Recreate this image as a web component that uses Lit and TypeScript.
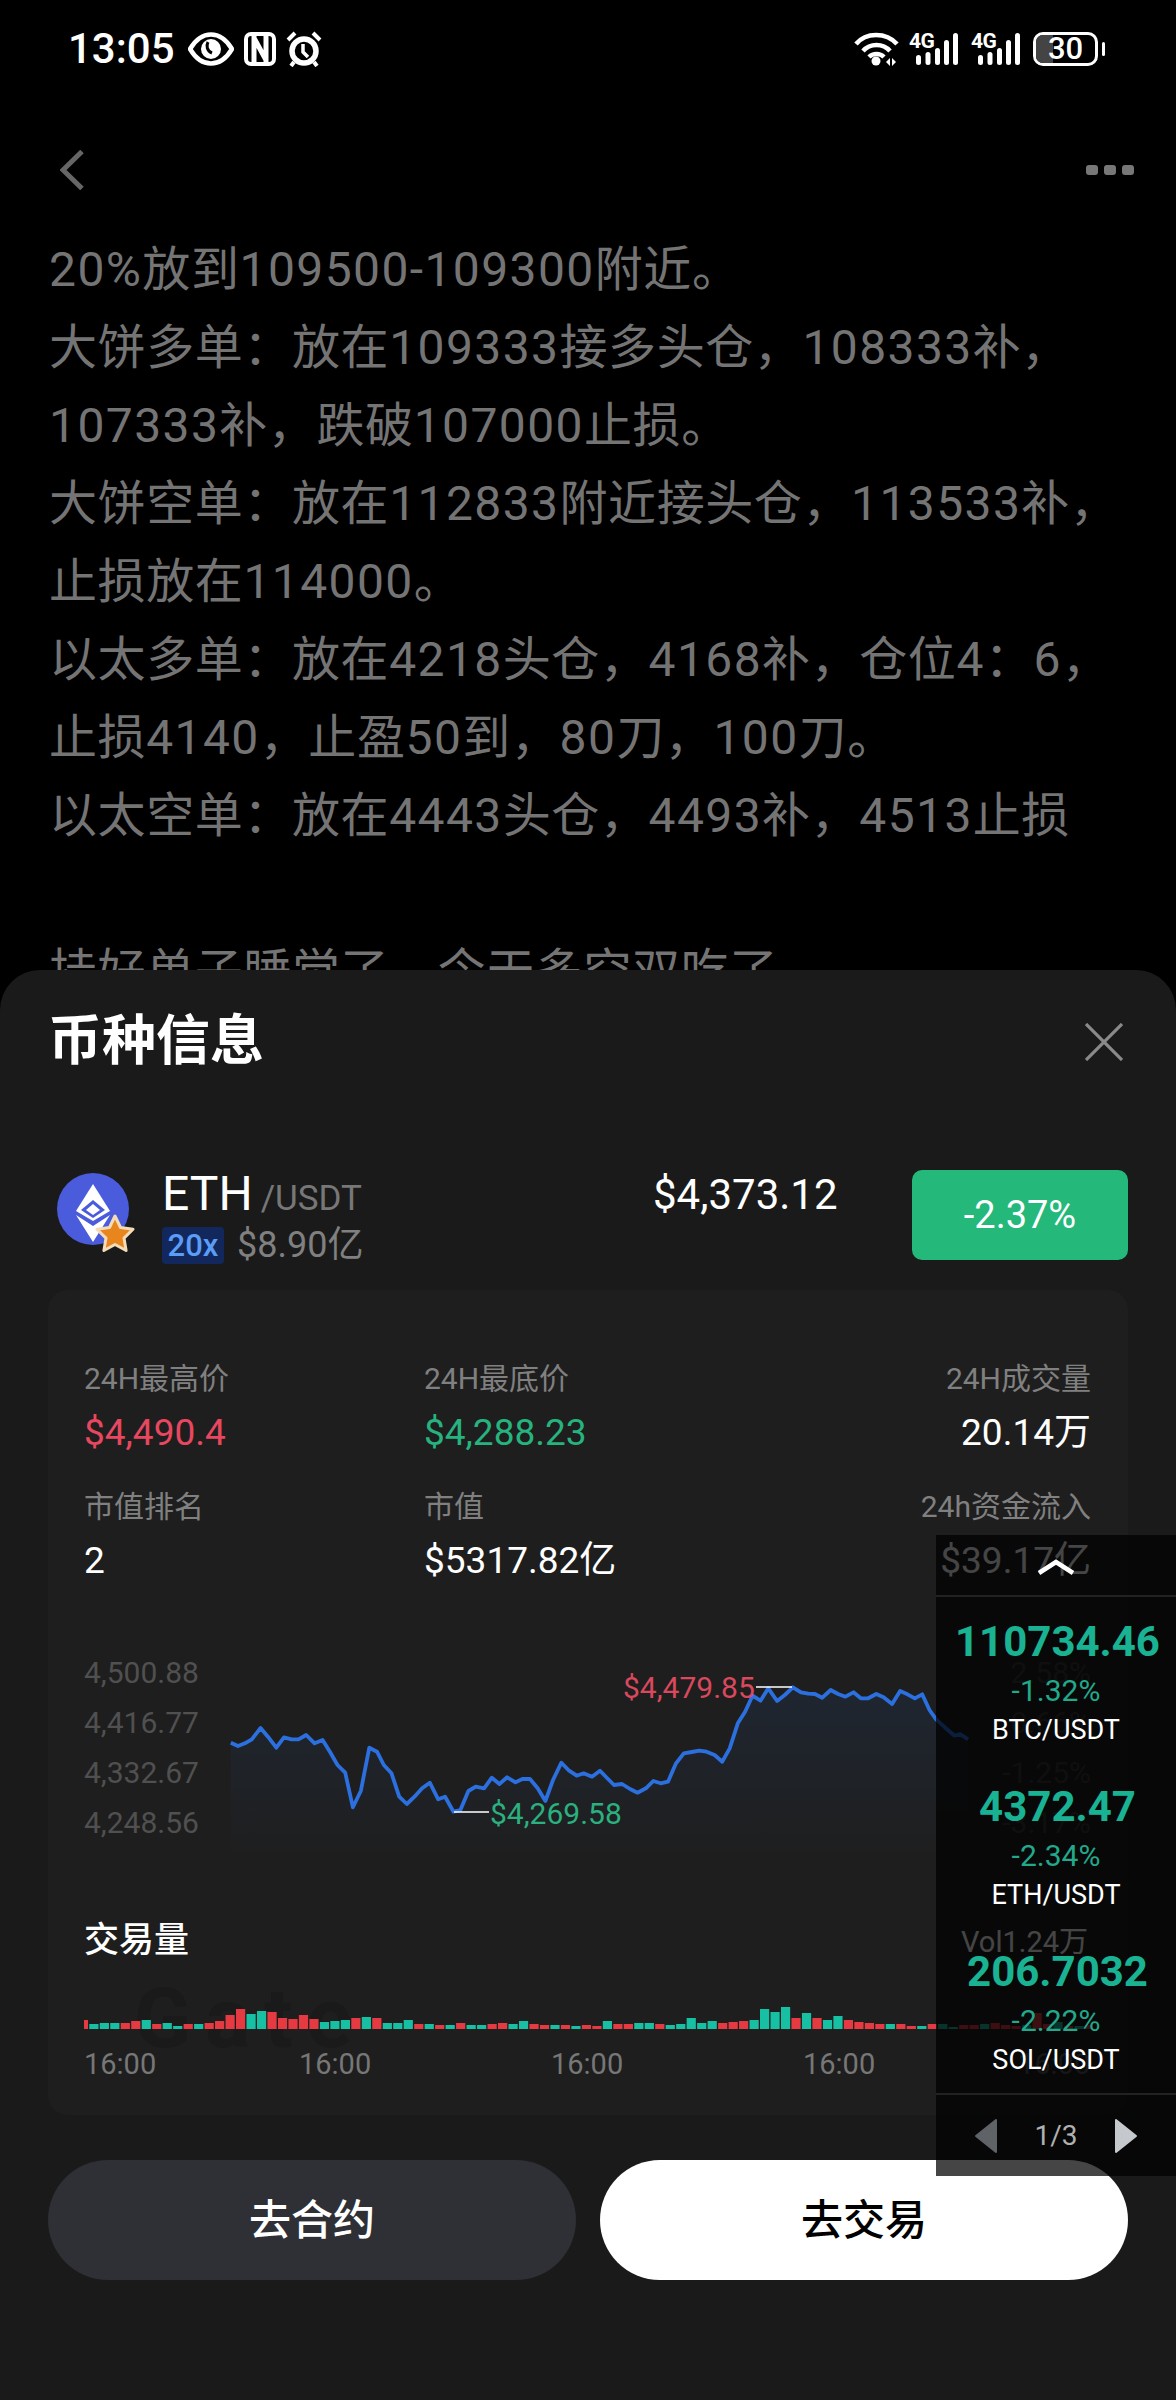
import {css, html, svg, LitElement} from 'lit';
import {customElement} from 'lit/decorators.js';

const note = [
	'20%放到109500-109300附近。',
	'大饼多单：放在109333接多头仓，108333补，',
	'107333补，跌破107000止损。',
	'大饼空单：放在112833附近接头仓，113533补，',
	'止损放在114000。',
	'以太多单：放在4218头仓，4168补，仓位4：6，',
	'止损4140，止盈50到，80刀，100刀。',
	'以太空单：放在4443头仓，4493补，4513止损',
	'',
	'挂好单子睡觉了，今天多空双吃了',
];

const stats = [
	{label: '24H最高价', value: '$4,490.4', cls: 'up'},
	{label: '24H最底价', value: '$4,288.23', cls: 'down'},
	{label: '24H成交量', value: '20.14万', cls: 'end'},
	{label: '市值排名', value: '2', cls: ''},
	{label: '市值', value: '$5317.82亿', cls: ''},
	{label: '24h资金流入', value: '$39.17亿', cls: 'end'},
];

const tickers = [
	{price: '110734.46', change: '-1.32%', pair: 'BTC/USDT'},
	{price: '4372.47', change: '-2.34%', pair: 'ETH/USDT'},
	{price: '206.7032', change: '-2.22%', pair: 'SOL/USDT'},
];

// traced from the chart, x in page px and y in page px
const lineA = [[603,428],[622,438],[640,430],[658,418],[681,384],[700,410],[722,443],[742,412],[762,418],[780,418],[800,405],[822,430],[843,420],[862,455],[882,495],[902,518],[922,622],[943,572],[965,443],[985,455],[1003,495],[1023,520],[1043,590],[1063,612],[1083,590],[1103,565],[1123,548],[1145,598],[1163,590],[1185,635],[1203,630],[1224,573],[1243,560],[1265,565],[1285,533],[1305,552],[1325,532],[1347,547],[1365,537],[1385,537],[1405,565],[1425,603],[1445,540],[1467,488],[1487,512],[1507,527],[1525,520],[1547,530]];
const lineB = [[0,512],[20,535],[38,555],[60,552],[82,567],[102,578],[125,565],[145,543],[165,550],[185,545],[207,490],[228,460],[250,456],[270,452],[290,455],[312,465],[333,485],[353,445],[375,370],[395,335],[415,287],[437,302],[458,265],[482,303],[503,285],[525,262],[547,277],[567,281],[585,282],[605,293],[628,270],[648,282],[668,290],[690,277],[710,295],[730,295],[752,282],[772,292],[795,312],[817,273],[837,283],[857,295],[877,283],[897,330],[915,358],[940,383],[965,407],[980,402],[1002,418]];
const points = [
	...lineA.map(([x, y]) => [x / 2.613, 1600 + y / 3]),
	...lineB.map(([x, y]) => [600 + x / 2.722, 1600 + y / 3]),
];
const linePath = points.map(([x, y], i) => `${i ? 'L' : 'M'}${x.toFixed(1)} ${y.toFixed(1)}`).join(' ');
const areaPath = `${linePath} L${points[points.length - 1][0].toFixed(1)} 1860 L${points[0][0].toFixed(1)} 1860 Z`;

// volume bars: height in px, u = red, d = green
const bars: [number, 'u' | 'd'][] = [
	[9,'u'],[5,'d'],[6,'d'],[6,'d'],[6,'u'],[8,'u'],[9,'d'],[5,'u'],[6,'d'],[3,'d'],[5,'u'],[5,'d'],[6,'u'],[8,'u'],[14,'u'],[20,'u'],[15,'d'],[18,'d'],[17,'u'],[11,'u'],[10,'u'],[14,'u'],[10,'u'],[7,'d'],[8,'d'],[9,'d'],[11,'u'],[12,'d'],[11,'u'],[6,'d'],[6,'d'],[9,'d'],[5,'u'],[5,'d'],[4,'u'],[4,'d'],[6,'u'],[4,'d'],[4,'d'],[5,'u'],[6,'u'],[5,'d'],[8,'d'],[5,'u'],[4,'u'],[4,'d'],[4,'u'],[3,'d'],[4,'u'],[3,'u'],
	[8,'d'],[5,'u'],[5,'u'],[6,'d'],[6,'d'],[5,'u'],[4,'d'],[5,'d'],[11,'d'],[6,'d'],[8,'d'],[6,'u'],[7,'u'],[8,'u'],[9,'d'],[20,'d'],[17,'d'],[22,'d'],[11,'u'],[16,'d'],[11,'u'],[9,'d'],[13,'d'],[9,'u'],[7,'u'],[6,'u'],[5,'u'],[5,'d'],[5,'u'],[3,'u'],[3,'d'],[5,'u'],
	[5,'d'],[2,'d'],[4,'u'],[4,'u'],[5,'d'],[6,'u'],[4,'u'],[3,'u'],[4,'d'],[16,'u'],[5,'u'],[7,'d'],[3,'u'],[3,'d'],[4,'u'],
];

@customElement('app-root')
export class AppRoot extends LitElement {
	protected render() {
		return html`
			${this.renderStatusBar()}
			<div class="nav">
				<svg width="24" height="40" viewBox="0 0 24 40"><path d="M22 1.500 3 20l19 18.500" fill="none" stroke="#666" stroke-width="5"/></svg>
				<div class="dots"><i></i><i></i><i></i></div>
			</div>
			<div class="note">
				${note.map((line) => html`<div class="line">${this.renderLine(line)}</div>`)}
			</div>
			<section class="sheet">
				<header>
					<h1>币种信息</h1>
					<svg width="38" height="38" viewBox="0 0 38 38"><path d="M1 1l36 36M37 1 1 37" stroke="#8a8a8a" stroke-width="3.200"/></svg>
				</header>
				${this.renderCoin()}
				<div class="card">
					<div class="stats">
						${stats.map((s) => html`
							<div class="stat ${s.cls}">
								<span>${s.label}</span>
								<b>${s.value}</b>
							</div>
						`)}
					</div>
					${this.renderChart()}
					<div class="vol-head"><h2>交易量</h2><span>Vol1.24万</span></div>
					${this.renderBars()}
					<div class="times">
						<span>16:00</span><span>16:00</span><span>16:00</span><span>16:00</span><span class="last">16:00</span>
					</div>
				</div>
				<div class="actions">
					<button class="dark">去合约</button>
					<button class="light">去交易</button>
				</div>
			</section>
			${this.renderTickers()}
		`;
	}

	private renderLine(line: string) {
		if (!line)
			return '\u00a0';
		// digits sit a little wider than the font's own spacing
		return line.split(/([0-9%\-]+)/).map((part, i) => i % 2 ? html`<span class="num">${part}</span>` : part);
	}

	private renderStatusBar() {
		return html`
			<div class="status">
				<div class="group">
					<span class="time">13:05</span>
					<svg width="46" height="34" viewBox="0 0 46 34">
						<path d="M2 17C8 7 15 2.500 23 2.500S38 7 44 17c-6 10-13 14.500-21 14.500S8 27 2 17Z" fill="none" stroke="#fff" stroke-width="4.500"/>
						<circle cx="23" cy="17" r="10" fill="#fff"/><path d="M20 10c-2 4-1 9 4 11" fill="none" stroke="#000" stroke-width="3"/>
					</svg>
					<svg width="32" height="34" viewBox="0 0 32 34">
						<rect x="2" y="2" width="28" height="30" rx="5" fill="none" stroke="#fff" stroke-width="4"/>
						<path d="M10 3v28M22 3v28M10 6l12 22" fill="none" stroke="#fff" stroke-width="5"/>
					</svg>
					<svg width="36" height="36" viewBox="0 0 36 36">
						<circle cx="18" cy="20" r="12" fill="none" stroke="#fff" stroke-width="5.500"/>
						<path d="M17 13v8l5 5" fill="none" stroke="#fff" stroke-width="3.500"/>
						<path d="M2 9 9 2M34 9 27 2" stroke="#fff" stroke-width="4"/>
						<path d="M8 31 5 35M28 31l3 4" stroke="#fff" stroke-width="4"/>
					</svg>
				</div>
				<div class="group right">
					<svg class="wifi" width="46" height="34" viewBox="0 0 46 34">
						<g fill="none" stroke="#fff" stroke-width="4.500">
							<path d="M2 12C12 0 32 0 43 12"/><path d="M9 19C16 11 29 11 36 19"/><path d="M15 25C19 21 26 21 30 25"/>
						</g>
						<circle cx="22" cy="29" r="4.500" fill="#fff"/>
						<path d="M36 26l-4 4 4 4ZM38 26l4 4-4 4Z" fill="#fff"/>
					</svg>
					${[0, 1].map(() => html`
						<div class="signal">
							<svg width="50" height="34" viewBox="0 0 50 34">
								${[[7, 10], [16.5, 13], [26, 17], [35, 25], [44, 32]].map(([x, h]) => svg`<rect x=${x} y=${33 - h} width="5" height=${h} rx="2.500" fill="#fff"/>`)}
							</svg>
							<span>4G</span>
						</div>
					`)}
					<div class="battery"><i></i><span>30</span></div>
					<div class="cap"></div>
				</div>
			</div>
		`;
	}

	private renderCoin() {
		return html`
			<div class="coin">
				<div class="logo">
					<svg width="80" height="80" viewBox="0 0 80 80">
						<circle cx="36" cy="36" r="36" fill="#4a5bdc"/>
						<path d="M36 11 19 38l17 10 17-10Z" fill="#fff"/>
						<path d="M36 27 24 37l12 8 12-8Z" fill="#4a5bdc"/>
						<path d="M36 31 29 37l7 5 7-5Z" fill="#fff"/>
						<path d="M19 42l17 11 17-11-17 27Z" fill="#fff"/>
						<path d="M58 43l5.500 11.500 12.500 1.800-9 8.800 2.100 12.400L58 71.500l-11.100 6 2.100-12.400-9-8.800 12.500-1.800Z" fill="#e8851c" stroke="#f4dcb8" stroke-width="3" stroke-linejoin="round"/>
					</svg>
				</div>
				<div class="names">
					<div class="pair"><b>ETH</b><span>/USDT</span></div>
					<div class="cap-row"><em>20x</em><span>$8.90亿</span></div>
				</div>
				<div class="price">$4,373.12</div>
				<div class="change">-2.37%</div>
			</div>
		`;
	}

	private renderChart() {
		return html`
			<div class="chart">
				<div class="axis">
					<span>4,500.88</span><span>4,416.77</span><span>4,332.67</span><span>4,248.56</span>
				</div>
				<div class="axis end">
					<span>2.58%</span><span>0.66%</span><span>-1.25%</span><span>-3.17%</span>
				</div>
				<svg class="plot" width="1007" height="200" viewBox="85 1648 1007 200">
					<defs>
						<linearGradient id="fill" x1="0" y1="0" x2="0" y2="1">
							<stop offset="0" stop-color="#2a6fdb" stop-opacity="0.1"/>
							<stop offset="1" stop-color="#2a6fdb" stop-opacity="0"/>
						</linearGradient>
					</defs>
					<path d=${areaPath} fill="url(#fill)"/>
					<path d=${linePath} fill="none" stroke="#2b70de" stroke-width="3.800" stroke-linejoin="round"/>
					<path d="M454 1812h35M756 1687h36" stroke="#fff" stroke-width="1.500"/>
					<text x="490" y="1824" class="low">$4,269.58</text>
					<text x="623" y="1698" class="high">$4,479.85</text>
				</svg>
			</div>
		`;
	}

	private renderBars() {
		return html`
			<div class="bars">
				<div class="mark">Gate</div>
				<svg width="1007" height="69" viewBox="0 0 1007 69">
					${bars.map(([h, side], i) => svg`<rect x=${i === 0 ? -1 : i * 10.48 - 5.2} y=${64 - h} width=${i === 0 ? 5 : 9.2} height=${h} fill=${side === 'u' ? '#e63a42' : '#17bfa3'}/>`)}
				</svg>
			</div>
		`;
	}

	private renderTickers() {
		return html`
			<aside class="tickers">
				<svg class="up-arrow" width="38" height="16" viewBox="0 0 38 16"><path d="M2 14 19 3l17 11" fill="none" stroke="#fff" stroke-width="4.500"/></svg>
				<div class="rows">
					${tickers.map((t) => html`
						<div class="ticker">
							<b>${t.price}</b>
							<span>${t.change}</span>
							<em>${t.pair}</em>
						</div>
					`)}
				</div>
				<div class="pager">
					<svg width="24" height="36" viewBox="0 0 24 36"><path d="M22 2 2 18l20 16Z" fill="#5f6368" stroke="#5f6368" stroke-width="2" stroke-linejoin="round"/></svg>
					<span>1/3</span>
					<svg width="24" height="36" viewBox="0 0 24 36"><path d="M2 2l20 16L2 34Z" fill="#c5c9ce" stroke="#c5c9ce" stroke-width="2" stroke-linejoin="round"/></svg>
				</div>
			</aside>
		`;
	}

	static styles = css`
		:host {
			display: block;
			position: relative;
			width: 1176px;
			height: 2400px;
			overflow: hidden;
			background: #000;
			color: #fff;
			font-family: Roboto, 'Noto Sans CJK SC', sans-serif;
		}

		.status {
			display: flex;
			justify-content: space-between;
			align-items: center;
			height: 34px;
			padding: 32px 71px 0 68px;

			.group {
				display: flex;
				align-items: center;
				gap: 10px;
			}
			.right {
				gap: 12px;
			}
			.wifi {
				margin-right: -3px;
			}
			.time {
				font-size: 42px;
				font-weight: 500;
				line-height: 34px;
				margin-right: 3px;
			}
			.signal {
				position: relative;
				width: 50px;
				height: 34px;
				span {
					position: absolute;
					left: 0;
					top: 0;
					font-size: 21px;
					line-height: 18px;
					font-weight: 700;
					letter-spacing: -0.5px;
				}
				svg {
					display: block;
				}
			}
			.battery {
				position: relative;
				box-sizing: border-box;
				width: 65px;
				height: 34px;
				border: 3px solid #fff;
				border-radius: 10px;
				i {
					position: absolute;
					inset: 0 auto 0 0;
					width: 17px;
					border-radius: 7px 0 0 7px;
					background: #444;
				}
				span {
					position: absolute;
					inset: 0;
					text-align: center;
					font-size: 31px;
					font-weight: 500;
					line-height: 28px;
				}
			}
			.cap {
				width: 3px;
				height: 14px;
				margin-left: -8px;
				background: #fff;
				border-radius: 2px;
			}
		}

		.nav {
			display: flex;
			justify-content: space-between;
			align-items: center;
			height: 40px;
			margin-top: 84px;
			padding: 0 42px 0 60px;
			.dots {
				display: flex;
				gap: 6px;
			}
			i {
				display: block;
				width: 12px;
				height: 10px;
				border-radius: 3px;
				background: #777;
			}
		}

		.note {
			margin-top: 41px;
			padding: 0 49px;
			font-size: 48px;
			letter-spacing: 0.6px;
			color: #747474;
			.line {
				height: 78px;
				line-height: 78px;
				white-space: nowrap;
			}
			.num {
				letter-spacing: 1.4px;
			}
		}

		.sheet {
			position: absolute;
			left: 0;
			right: 0;
			top: 970px;
			bottom: 0;
			padding: 40px 48px 0;
			background: #1a1a1a;
			border-radius: 40px 40px 0 0;

			header {
				display: flex;
				justify-content: space-between;
				align-items: center;
				height: 64px;
				padding: 0 5px 0 0;
			}
			h1 {
				margin: 0;
				font-size: 54px;
				line-height: 64px;
				font-weight: 700;
			}
		}

		.coin {
			display: flex;
			align-items: flex-start;
			height: 90px;
			margin-top: 96px;
			.logo {
				width: 80px;
				height: 80px;
				margin: 3px 25px 0 9px;
			}
			.names {
				width: 491px;
			}
			.pair {
				display: flex;
				align-items: baseline;
				height: 48px;
				b {
					font-size: 48px;
					line-height: 48px;
					font-weight: 400;
				}
				span {
					margin-left: 8px;
					font-size: 35px;
					color: #777;
				}
			}
			.cap-row {
				display: flex;
				align-items: center;
				margin-top: 9px;
				em {
					width: 62px;
					height: 37px;
					background: #12285c;
					border-radius: 4px;
					color: #5b9cf6;
					font-style: normal;
					font-size: 31px;
					font-weight: 500;
					line-height: 37px;
					text-align: center;
				}
				span {
					margin-left: 13px;
					font-size: 36px;
					line-height: 37px;
					color: #808080;
				}
			}
			.price {
				width: 259px;
				font-size: 42px;
				line-height: 44px;
				margin-top: 3px;
			}
			.change {
				width: 216px;
				height: 90px;
				border-radius: 10px;
				background: #24b87a;
				text-align: center;
				font-size: 38px;
				line-height: 90px;
			}
		}

		.card {
			height: 825px;
			box-sizing: border-box;
			margin-top: 30px;
			padding: 69px 37px 0 36px;
			background: #1e1e1e;
			border-radius: 20px;
		}

		.stats {
			display: grid;
			grid-template-columns: 340px 1fr 340px;
			row-gap: 32px;
			.stat {
				display: flex;
				flex-direction: column;
				gap: 12px;
			}
			span {
				font-size: 30px;
				line-height: 40px;
				color: #808080;
			}
			b {
				font-size: 37px;
				line-height: 44px;
				font-weight: 400;
			}
			.up b { color: #e8475f; }
			.down b { color: #26b37e; }
			.end { text-align: right; }
		}

		.chart {
			position: relative;
			display: flex;
			justify-content: space-between;
			height: 200px;
			margin-top: 65px;
			.axis {
				display: flex;
				flex-direction: column;
			}
			.axis.end {
				text-align: right;
			}
			span {
				font-size: 30px;
				line-height: 50px;
				color: #505050;
			}
			.end span {
				color: #3a3a3a;
			}
			.plot {
				position: absolute;
				left: 1px;
				top: 0;
				overflow: visible;
			}
			text {
				font-size: 30px;
				font-family: Roboto, sans-serif;
			}
			.low { fill: #2bb07f; }
			.high { fill: #d9485c; }
		}

		.vol-head {
			display: flex;
			justify-content: space-between;
			align-items: center;
			height: 50px;
			margin-top: 63px;
			margin-bottom: 4px;
			h2 {
				margin: 0;
				font-size: 35px;
				font-weight: 500;
			}
			span {
				font-size: 29px;
				color: #fff;
				margin: 6px 3px 0 0;
			}
		}

		.bars {
			position: relative;
			height: 69px;
			svg {
				display: block;
				position: relative;
			}
			.mark {
				position: absolute;
				left: 50px;
				top: 14px;
				font-size: 84px;
				line-height: 80px;
				font-weight: 700;
				letter-spacing: 14px;
				color: #1a1a1a;
			}
		}

		.times {
			display: grid;
			grid-template-columns: 215px 252px 252px 215px 73px;
			margin-top: 10px;
			span {
				font-size: 29px;
				line-height: 40px;
				color: #777;
			}
			.last {
				color: #555;
			}
		}

		.actions {
			display: grid;
			grid-template-columns: 1fr 1fr;
			gap: 24px;
			margin-top: 45px;
			button {
				height: 120px;
				border: 0;
				border-radius: 60px;
				padding: 0 0 8px;
				font-family: inherit;
				font-size: 42px;
				font-weight: 500;
			}
			.dark {
				background: #2e3035;
				color: #fff;
			}
			.light {
				background: #fff;
				color: #000;
			}
		}

		.tickers {
			position: absolute;
			left: 936px;
			top: 1535px;
			width: 240px;
			height: 641px;
			background: rgba(0, 0, 0, 0.73);
			text-align: center;
			display: flex;
			flex-direction: column;

			.up-arrow {
				display: block;
				margin: 24px auto 20px;
				flex: none;
			}
			.rows {
				flex: none;
				height: 500px;
				border-top: 2px solid #222;
				border-bottom: 2px solid #222;
				padding-top: 20px;
				box-sizing: border-box;
			}
			.ticker {
				display: flex;
				flex-direction: column;
				align-items: center;
				height: 165px;
			}
			b {
				font-size: 42px;
				line-height: 50px;
				font-weight: 700;
				color: #19b394;
				padding-left: 3px;
			}
			span {
				font-size: 30px;
				line-height: 40px;
				margin-top: 4px;
				color: #22a88b;
			}
			em {
				font-style: normal;
				font-size: 27px;
				line-height: 36px;
				margin-top: 1px;
				color: #fff;
			}
			.pager {
				flex: none;
				display: flex;
				justify-content: space-between;
				align-items: center;
				height: 81px;
				padding: 0 38px;
				span {
					margin: 0;
					font-size: 28px;
					color: #b0b0b0;
				}
			}
		}
	`;
}
